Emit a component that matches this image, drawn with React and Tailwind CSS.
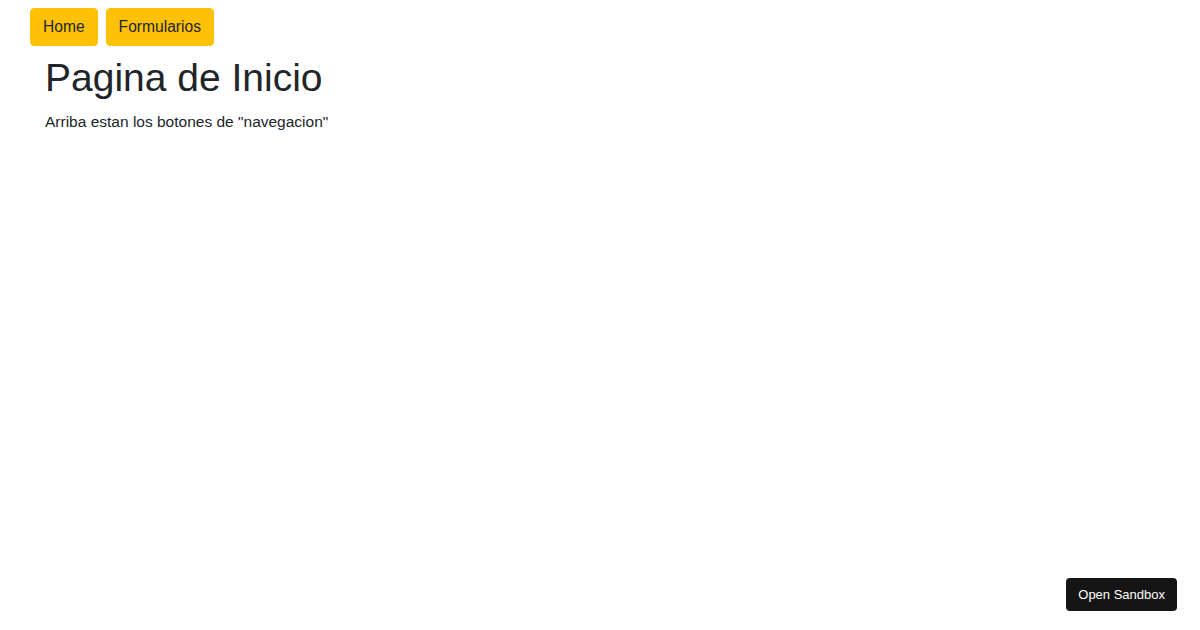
export default function App() {
  return (
    <div className="relative min-h-[630px] w-full bg-white text-[#212529] font-['Liberation_Sans',Arial,sans-serif]">
      <div className="flex gap-2 pl-[30px] pt-2">
        <button className="h-[38px] rounded-[4px] border border-[#ffc107] bg-[#ffc107] px-3 text-[15.6px] leading-6 text-[#212529]">
          Home
        </button>
        <button className="h-[38px] rounded-[4px] border border-[#ffc107] bg-[#ffc107] px-3 text-[15.6px] leading-6 text-[#212529]">
          Formularios
        </button>
      </div>
      <div className="pl-[45px]">
        <h1 className="mt-[8px] mb-2 text-[39px] leading-[48px] font-normal">Pagina de Inicio</h1>
        <p className="text-[15.5px] leading-6">Arriba estan los botones de "navegacion"</p>
      </div>
      <button className="absolute right-[23px] top-[578px] flex h-[33px] items-center rounded-[4px] bg-[#151515] px-3 text-[13px] text-white">
        Open Sandbox
      </button>
    </div>
  );
}
